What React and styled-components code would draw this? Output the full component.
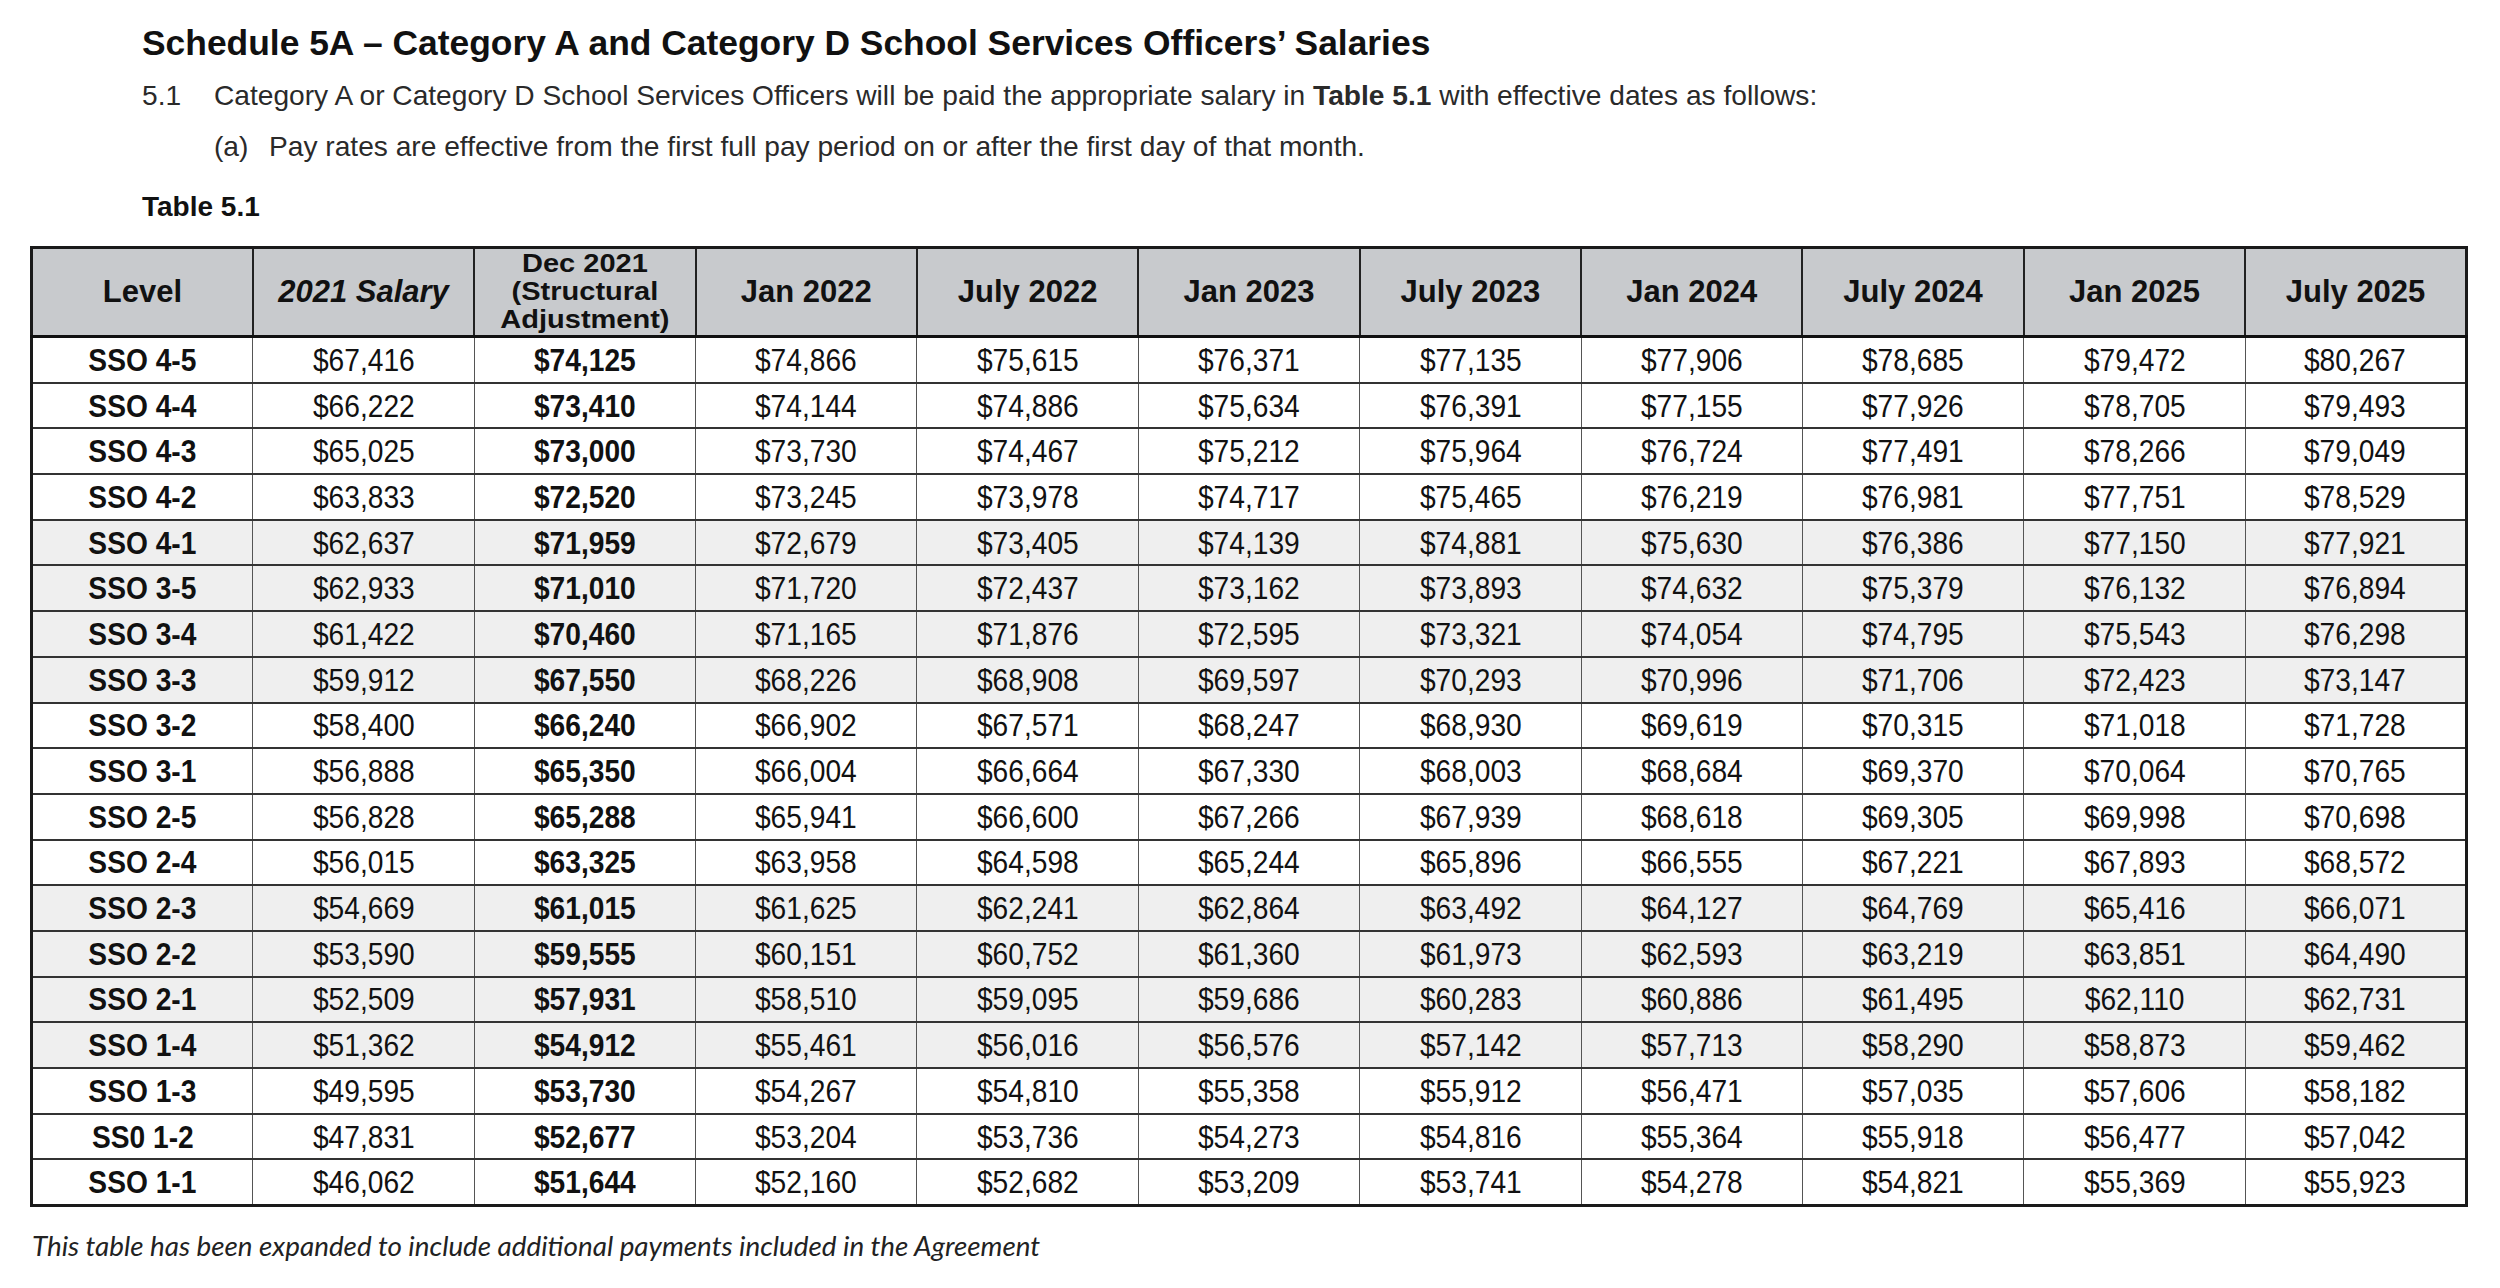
import React from 'react'
import styled, { createGlobalStyle } from 'styled-components'

const GlobalStyle = createGlobalStyle`
  body {
    margin: 0;
    background: #ffffff;
    font-family: "Liberation Sans", Arial, sans-serif;
    color: #111;
  }
`

const Page = styled.div`
  width: 2500px;
  height: 1288px;
  padding: 21px 30px 0 30px;
  box-sizing: border-box;
`

const Intro = styled.div`
  padding-left: 112px;
`

const Title = styled.h1`
  margin: 0;
  font-size: 35.4px;
  line-height: 44px;
  font-weight: 700;
  color: #111;
`

const Clause = styled.div`
  display: flex;
  margin-top: ${p => p.top}px;
  padding-left: ${p => p.indent || 0}px;
  font-size: 28.15px;
  line-height: 38px;
  color: #2a2a2a;
`

const ClauseNum = styled.span`
  width: ${p => p.w}px;
  flex-shrink: 0;
`

const TableLabel = styled.div`
  margin-top: 22px;
  font-size: 28px;
  font-weight: 700;
  line-height: 38px;
  color: #111;
`

const Table = styled.table`
  margin-top: 20px;
  width: 2438px;
  table-layout: fixed;
  border-collapse: collapse;
  border: 3px solid #1a1a1a;
`

const HeadCell = styled.th`
  height: 85px;
  padding: 0 4px;
  background: #c8cacd;
  border-left: 2px solid #222;
  border-bottom: 3px solid #111;
  font-size: 31px;
  line-height: 34px;
  font-weight: 700;
  font-style: ${p => (p.italic ? 'italic' : 'normal')};
  color: #111;
  text-align: center;
  vertical-align: middle;
`

const StackedHead = styled.span`
  display: inline-block;
  font-size: 25px;
  line-height: 28px;
  transform: scaleX(1.16);
`

const Row = styled.tr`
  background: ${p => (p.shaded ? '#efefef' : '#ffffff')};
  border-top: 2px solid #333;
`

const Cell = styled.td`
  height: 43.7px;
  padding: 0;
  border-left: 1px solid #555;
  font-size: 32px;
  line-height: 34px;
  font-weight: ${p => (p.bold ? 700 : 400)};
  color: #111;
  text-align: center;
  vertical-align: middle;
`

const Value = styled.span`
  display: inline-block;
  transform: scaleX(0.88);
`

const Note = styled.p`
  margin: 21px 0 0 2px;
  font-family: Lato, "Open Sans", sans-serif;
  font-style: italic;
  font-size: 27.8px;
  line-height: 36px;
  color: #222;
`

const columns = [
  'Level', '2021 Salary', 'Dec 2021', 'Jan 2022', 'July 2022', 'Jan 2023',
  'July 2023', 'Jan 2024', 'July 2024', 'Jan 2025', 'July 2025'
]

const rows = [
  ['SSO 4-5', '67,416', '74,125', '74,866', '75,615', '76,371', '77,135', '77,906', '78,685', '79,472', '80,267'],
  ['SSO 4-4', '66,222', '73,410', '74,144', '74,886', '75,634', '76,391', '77,155', '77,926', '78,705', '79,493'],
  ['SSO 4-3', '65,025', '73,000', '73,730', '74,467', '75,212', '75,964', '76,724', '77,491', '78,266', '79,049'],
  ['SSO 4-2', '63,833', '72,520', '73,245', '73,978', '74,717', '75,465', '76,219', '76,981', '77,751', '78,529'],
  ['SSO 4-1', '62,637', '71,959', '72,679', '73,405', '74,139', '74,881', '75,630', '76,386', '77,150', '77,921'],
  ['SSO 3-5', '62,933', '71,010', '71,720', '72,437', '73,162', '73,893', '74,632', '75,379', '76,132', '76,894'],
  ['SSO 3-4', '61,422', '70,460', '71,165', '71,876', '72,595', '73,321', '74,054', '74,795', '75,543', '76,298'],
  ['SSO 3-3', '59,912', '67,550', '68,226', '68,908', '69,597', '70,293', '70,996', '71,706', '72,423', '73,147'],
  ['SSO 3-2', '58,400', '66,240', '66,902', '67,571', '68,247', '68,930', '69,619', '70,315', '71,018', '71,728'],
  ['SSO 3-1', '56,888', '65,350', '66,004', '66,664', '67,330', '68,003', '68,684', '69,370', '70,064', '70,765'],
  ['SSO 2-5', '56,828', '65,288', '65,941', '66,600', '67,266', '67,939', '68,618', '69,305', '69,998', '70,698'],
  ['SSO 2-4', '56,015', '63,325', '63,958', '64,598', '65,244', '65,896', '66,555', '67,221', '67,893', '68,572'],
  ['SSO 2-3', '54,669', '61,015', '61,625', '62,241', '62,864', '63,492', '64,127', '64,769', '65,416', '66,071'],
  ['SSO 2-2', '53,590', '59,555', '60,151', '60,752', '61,360', '61,973', '62,593', '63,219', '63,851', '64,490'],
  ['SSO 2-1', '52,509', '57,931', '58,510', '59,095', '59,686', '60,283', '60,886', '61,495', '62,110', '62,731'],
  ['SSO 1-4', '51,362', '54,912', '55,461', '56,016', '56,576', '57,142', '57,713', '58,290', '58,873', '59,462'],
  ['SSO 1-3', '49,595', '53,730', '54,267', '54,810', '55,358', '55,912', '56,471', '57,035', '57,606', '58,182'],
  ['SS0 1-2', '47,831', '52,677', '53,204', '53,736', '54,273', '54,816', '55,364', '55,918', '56,477', '57,042'],
  ['SSO 1-1', '46,062', '51,644', '52,160', '52,682', '53,209', '53,741', '54,278', '54,821', '55,369', '55,923'],
]

const App = () => {
  return (
    <Page>
      <GlobalStyle />
      <Intro>
        <Title>Schedule 5A – Category A and Category D School Services Officers’ Salaries</Title>
        <Clause top={12}>
          <ClauseNum w={72}>5.1</ClauseNum>
          <span>Category A or Category D School Services Officers will be paid the appropriate salary in <b>Table 5.1</b> with effective dates as follows:</span>
        </Clause>
        <Clause top={13} indent={72}>
          <ClauseNum w={55}>(a)</ClauseNum>
          <span>Pay rates are effective from the first full pay period on or after the first day of that month.</span>
        </Clause>
        <TableLabel>Table 5.1</TableLabel>
      </Intro>

      <Table>
        <thead>
          <tr>
            {columns.map((c, i) => (
              <HeadCell key={c} italic={i === 1} style={i === 0 ? { borderLeft: 'none' } : undefined}>
                {i === 2
                  ? <StackedHead>Dec 2021<br />(Structural<br />Adjustment)</StackedHead>
                  : c}
              </HeadCell>
            ))}
          </tr>
        </thead>
        <tbody>
          {rows.map((r, ri) => (
            <Row key={r[0]} shaded={Math.floor(ri / 4) % 2 === 1}>
              {r.map((v, ci) => (
                <Cell key={ci} bold={ci === 0 || ci === 2}>
                  <Value>{ci === 0 ? v : '$' + v}</Value>
                </Cell>
              ))}
            </Row>
          ))}
        </tbody>
      </Table>

      <Note>This table has been expanded to include additional payments included in the Agreement</Note>
    </Page>
  )
}

export default App
